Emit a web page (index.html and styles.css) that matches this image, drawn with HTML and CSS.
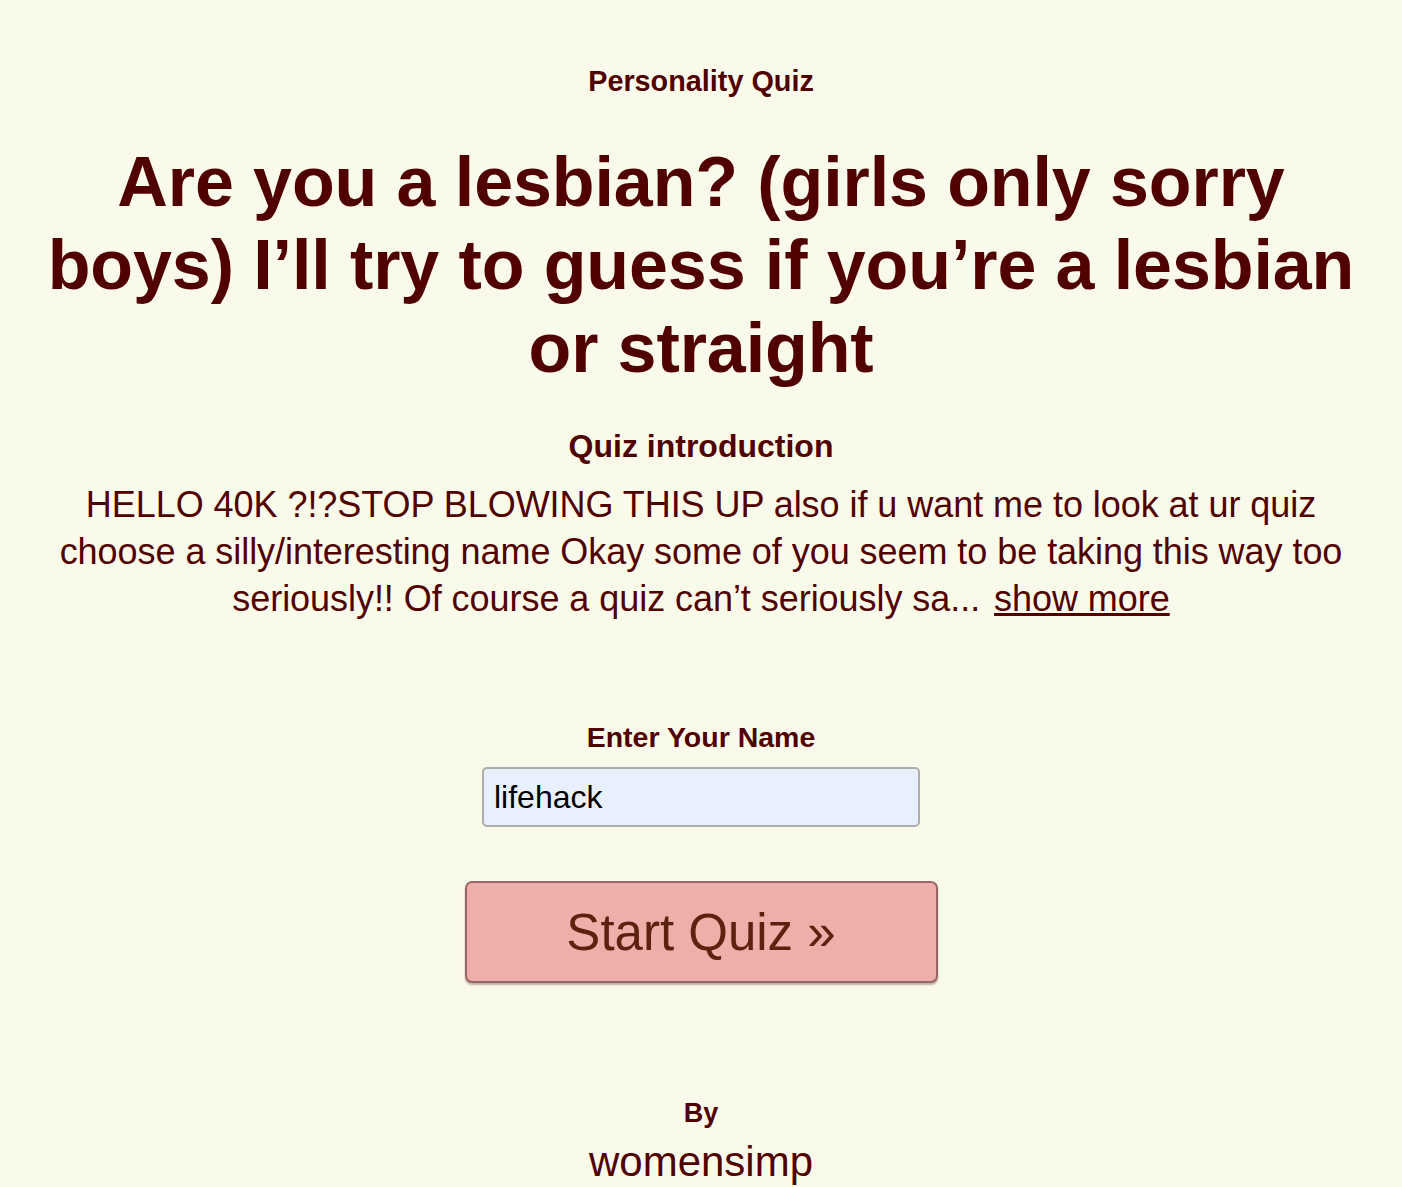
FILE: index.html
```html
<!DOCTYPE html>
<html lang="en">
<head>
<meta charset="utf-8">
<title>Are you a lesbian? Personality Quiz</title>
<link rel="stylesheet" href="styles.css">
</head>
<body>
<main class="page">
  <header class="quiz-head">
    <div class="kicker">Personality Quiz</div>
    <h1 class="title">Are you a lesbian? (girls only sorry boys) I’ll try to guess if you’re a lesbian or straight</h1>
  </header>
  <section class="intro">
    <h2 class="intro-heading">Quiz introduction</h2>
    <p class="intro-text">HELLO 40K ?!?STOP BLOWING THIS UP also if u want me to look at ur quiz choose a silly/interesting name Okay some of you seem to be taking this way too seriously!! Of course a quiz can’t seriously sa... <a class="more" href="#">show more</a></p>
  </section>
  <form class="start-form" onsubmit="return false;">
    <label class="name-label" for="name">Enter Your Name</label>
    <input class="name-input" id="name" type="text" value="lifehack">
    <button class="start-btn" type="submit">Start Quiz »</button>
  </form>
  <footer class="author">
    <div class="by">By</div>
    <div class="author-name">womensimp</div>
  </footer>
</main>
</body>
</html>
```
FILE: styles.css
```css
html, body {
  margin: 0;
  padding: 0;
  background: #fafaeb;
}
body {
  font-family: "Liberation Sans", Arial, sans-serif;
  color: #510000;
}
.page {
  width: 1322px;
  margin: 0 auto;
  padding-top: 64px;
  text-align: center;
  display: flex;
  flex-direction: column;
  align-items: center;
}
.quiz-head {
  display: flex;
  flex-direction: column;
  align-items: center;
}
.kicker {
  font-size: 28.8px;
  font-weight: bold;
  line-height: 34px;
}
.title {
  margin: 43px 0 0;
  font-size: 70px;
  line-height: 83px;
  font-weight: bold;
  letter-spacing: -0.1px;
}
.intro {
  margin-top: 37px;
}
.intro-heading {
  margin: 0;
  font-size: 32px;
  line-height: 38px;
  font-weight: bold;
}
.intro-text {
  margin: 16px 0 0;
  font-size: 36px;
  line-height: 47px;
  letter-spacing: -0.05px;
}
.more {
  margin-left: 4px;
  color: #510000;
  text-decoration: underline;
}
.start-form {
  margin-top: 98px;
  display: flex;
  flex-direction: column;
  align-items: center;
}
.name-label {
  font-size: 28.5px;
  font-weight: bold;
  line-height: 34px;
}
.name-input {
  box-sizing: border-box;
  margin-top: 13px;
  width: 438px;
  height: 60px;
  padding: 0 10px;
  border: 2px solid #adadad;
  border-radius: 5px;
  background: #e8f0fe;
  font-family: "Liberation Sans", Arial, sans-serif;
  font-size: 32px;
  color: #000;
  outline: none;
}
.start-btn {
  box-sizing: border-box;
  margin-top: 54px;
  width: 473px;
  height: 102px;
  border: 2px solid #9a6767;
  border-radius: 7px;
  background: #eeaeaa;
  box-shadow: 0 2px 2px rgba(80, 40, 30, 0.35);
  font-family: "Liberation Sans", Arial, sans-serif;
  font-size: 51px;
  color: #5c2210;
  cursor: pointer;
  padding: 0;
}
.author {
  margin-top: 114px;
  display: flex;
  flex-direction: column;
  align-items: center;
}
.by {
  font-size: 27px;
  font-weight: bold;
  line-height: 33px;
}
.author-name {
  margin-top: 8px;
  font-size: 42px;
  line-height: 48px;
}
```
